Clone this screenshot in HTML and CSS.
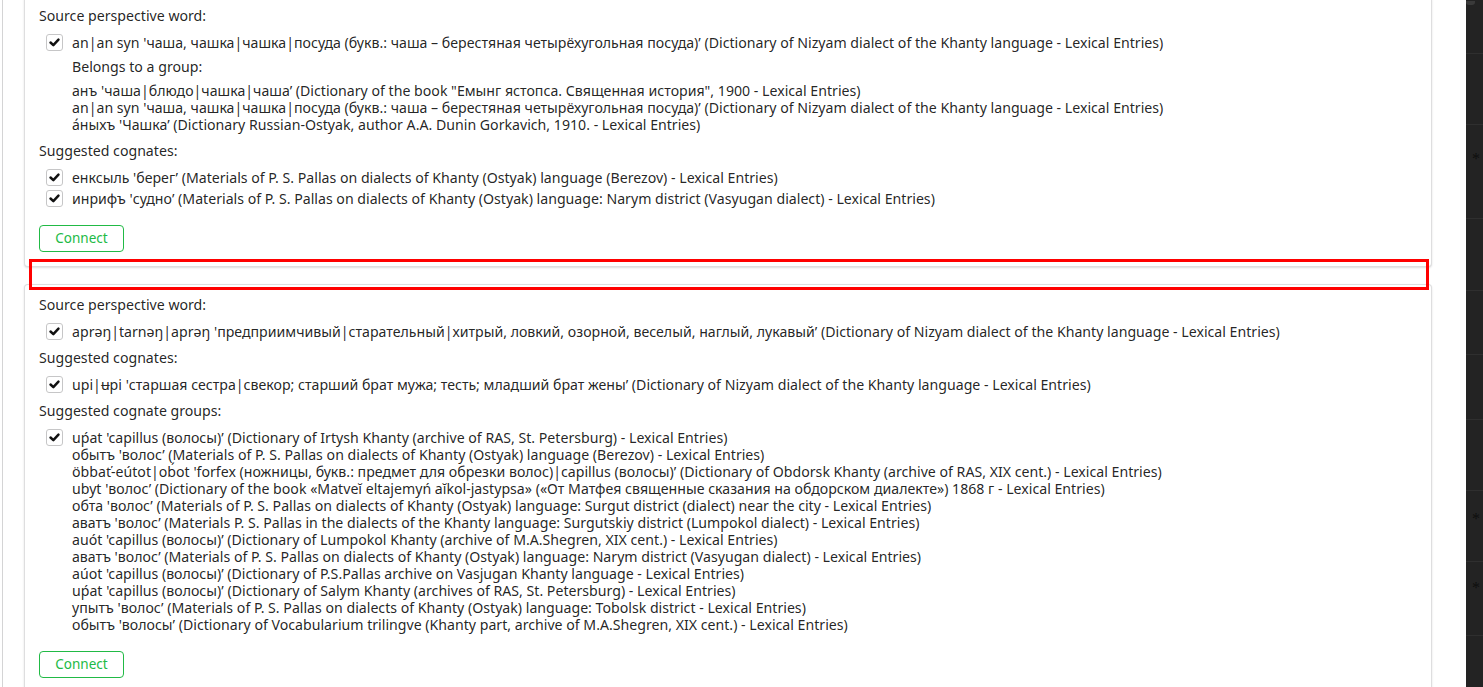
FILE: index.html
```html
<!DOCTYPE html>
<html lang="ru">
<head>
<meta charset="utf-8">
<title>Cognates</title>
<link rel="stylesheet" href="styles.css">
</head>
<body>
<div class="screen">
  <div class="modal">
    <div class="cards">
      <div class="card">
        <div class="label">Source perspective word:</div>
        <div class="item">
          <span class="cb"><svg viewBox="0 0 17 17"><polyline points="4,8.5 7.2,11.5 13,5.2"/></svg></span>
          <div class="text">an|an syn 'чаша, чашка|чашка|посуда (букв.: чаша – берестяная четырёхугольная посуда)’ (Dictionary of Nizyam dialect of the Khanty language - Lexical Entries)</div>
        </div>
        <div class="group">
          <div class="label group-label">Belongs to a group:</div>
          <div class="lines">
            <div>анъ 'чаша|блюдо|чашка|чаша’ (Dictionary of the book "Емынг ястопса. Священная история", 1900 - Lexical Entries)</div>
            <div>an|an syn 'чаша, чашка|чашка|посуда (букв.: чаша – берестяная четырёхугольная посуда)’ (Dictionary of Nizyam dialect of the Khanty language - Lexical Entries)</div>
            <div>а́ныхъ 'Чашка’ (Dictionary Russian-Ostyak, author A.A. Dunin Gorkavich, 1910. - Lexical Entries)</div>
          </div>
        </div>
        <div class="label section after-group">Suggested cognates:</div>
        <div class="item">
          <span class="cb"><svg viewBox="0 0 17 17"><polyline points="4,8.5 7.2,11.5 13,5.2"/></svg></span>
          <div class="text">енксыль 'берег’ (Materials of P. S. Pallas on dialects of Khanty (Ostyak) language (Berezov) - Lexical Entries)</div>
        </div>
        <div class="item tight">
          <span class="cb"><svg viewBox="0 0 17 17"><polyline points="4,8.5 7.2,11.5 13,5.2"/></svg></span>
          <div class="text">инрифъ 'судно’ (Materials of P. S. Pallas on dialects of Khanty (Ostyak) language: Narym district (Vasyugan dialect) - Lexical Entries)</div>
        </div>
        <button class="connect">Connect</button>
      </div>

      <div class="card">
        <div class="label">Source perspective word:</div>
        <div class="item">
          <span class="cb"><svg viewBox="0 0 17 17"><polyline points="4,8.5 7.2,11.5 13,5.2"/></svg></span>
          <div class="text">aprəŋ|tarnəŋ|aprəŋ 'предприимчивый|старательный|хитрый, ловкий, озорной, веселый, наглый, лукавый’ (Dictionary of Nizyam dialect of the Khanty language - Lexical Entries)</div>
        </div>
        <div class="label section">Suggested cognates:</div>
        <div class="item">
          <span class="cb"><svg viewBox="0 0 17 17"><polyline points="4,8.5 7.2,11.5 13,5.2"/></svg></span>
          <div class="text">upi|ʉpi 'старшая сестра|свекор; старший брат мужа; тесть; младший брат жены’ (Dictionary of Nizyam dialect of the Khanty language - Lexical Entries)</div>
        </div>
        <div class="label section">Suggested cognate groups:</div>
        <div class="item">
          <span class="cb"><svg viewBox="0 0 17 17"><polyline points="4,8.5 7.2,11.5 13,5.2"/></svg></span>
          <div class="text">
            <div>uṕat 'capillus (волосы)’ (Dictionary of Irtysh Khanty (archive of RAS, St. Petersburg) - Lexical Entries)</div>
            <div>обытъ 'волос’ (Materials of P. S. Pallas on dialects of Khanty (Ostyak) language (Berezov) - Lexical Entries)</div>
            <div>öbbať-eútot|ob́ot 'forfex (ножницы, букв.: предмет для обрезки волос)|capillus (волосы)’ (Dictionary of Obdorsk Khanty (archive of RAS, XIX cent.) - Lexical Entries)</div>
            <div>ubyt 'волос’ (Dictionary of the book «Matveĭ eltajemyń aĭkol-jastypsa» («От Матфея священные сказания на обдорском диалекте») 1868 г - Lexical Entries)</div>
            <div>обта 'волос’ (Materials of P. S. Pallas on dialects of Khanty (Ostyak) language: Surgut district (dialect) near the city - Lexical Entries)</div>
            <div>аватъ 'волос’ (Materials P. S. Pallas in the dialects of the Khanty language: Surgutskiy district (Lumpokol dialect) - Lexical Entries)</div>
            <div>auót 'capillus (волосы)’ (Dictionary of Lumpokol Khanty (archive of M.A.Shegren, XIX cent.) - Lexical Entries)</div>
            <div>аватъ 'волос’ (Materials of P. S. Pallas on dialects of Khanty (Ostyak) language: Narym district (Vasyugan dialect) - Lexical Entries)</div>
            <div>aúot 'capillus (волосы)’ (Dictionary of P.S.Pallas archive on Vasjugan Khanty language - Lexical Entries)</div>
            <div>uṕat 'capillus (волосы)’ (Dictionary of Salym Khanty (archives of RAS, St. Petersburg) - Lexical Entries)</div>
            <div>упытъ 'волос’ (Materials of P. S. Pallas on dialects of Khanty (Ostyak) language: Tobolsk district - Lexical Entries)</div>
            <div>обытъ 'волосы’ (Dictionary of Vocabularium trilingve (Khanty part, archive of M.A.Shegren, XIX cent.) - Lexical Entries)</div>
          </div>
        </div>
        <button class="connect">Connect</button>
      </div>
    </div>
    <div class="highlight"></div>
  </div>
  <div class="backdrop">
    <div class="cell c1"><span class="peek"></span></div>
    <div class="cell c2"></div>
    <div class="cell c3"><span class="star">*</span></div>
    <div class="cell c4"></div>
    <div class="cell c5"></div>
    <div class="cell c6"></div>
    <div class="cell c7"></div>
    <div class="cell c8"><span class="star">*</span></div>
    <div class="cell c9"><span class="star">*</span></div>
    <div class="cell c10"></div>
  </div>
</div>
</body>
</html>
```

FILE: styles.css
```css
* { box-sizing: border-box; }

html, body {
  margin: 0;
  padding: 0;
  background: #ffffff;
}

body {
  width: 1483px;
  height: 687px;
  overflow: hidden;
  font-family: "Noto Sans", "Open Sans", sans-serif;
  font-size: 14.15px;
  color: rgba(0, 0, 0, 0.87);
}

.screen {
  display: flex;
  height: 687px;
}

.modal {
  position: relative;
  flex: 1;
  margin-left: 2px;
  border-left: 1px solid #d4d4d5;
  padding: 0 34px 0 21px;
  overflow: hidden;
}

.cards {
  display: flex;
  flex-direction: column;
  gap: 17px;
  margin-top: -5px;
}

.card {
  background: #fff;
  border: 1px solid rgba(34, 36, 38, 0.15);
  border-radius: 4px;
  box-shadow: 0 1px 2px 0 rgba(34, 36, 38, 0.15);
  padding: 10px 14px 14px 14px;
}

.label {
  line-height: 19px;
  height: 19px;
  white-space: nowrap;
}

.label.section {
  margin-top: 6px;
}

.label.section.after-group {
  margin-top: 8px;
}

.item {
  display: flex;
  align-items: flex-start;
  margin-top: 7px;
  padding: 2px 0 2px 7px;
}

.item.tight {
  margin-top: 0;
}

.cb {
  flex: none;
  width: 17px;
  height: 17px;
  border: 1px solid #c6c6c7;
  border-radius: 3px;
  background: #fff;
  display: flex;
  align-items: center;
  justify-content: center;
}

.cb svg {
  width: 15px;
  height: 15px;
}

.cb polyline {
  fill: none;
  stroke: #111;
  stroke-width: 2.8;
  stroke-linecap: round;
  stroke-linejoin: round;
}

.text {
  margin-left: 9px;
  line-height: 17px;
  white-space: nowrap;
}

.group {
  padding-left: 33px;
}

.group-label {
  margin-top: 4px;
}

.lines {
  margin-top: 6px;
  line-height: 17px;
  white-space: nowrap;
}

.connect {
  display: block;
  margin-top: 16px;
  width: 85px;
  height: 27px;
  padding: 0;
  border: 1px solid #21ba45;
  border-radius: 4px;
  background: #fff;
  color: #21ba45;
  font-family: "Noto Sans", "Open Sans", sans-serif;
  font-size: 13.5px;
  line-height: 25px;
  text-align: center;
}

.highlight {
  position: absolute;
  left: 26px;
  top: 259px;
  width: 1400px;
  height: 31px;
  border: 3px solid #ff0000;
}

.backdrop {
  flex: none;
  width: 17px;
  background: #232323;
  display: flex;
  flex-direction: column;
  overflow: hidden;
  font-family: "Liberation Serif", serif;
}

.cell {
  flex: none;
  border-bottom: 1px solid #2f2f2f;
  position: relative;
}

.c1 { height: 54px; }
.c2 { height: 71px; }
.c3 { height: 94px; }
.c4 { height: 72px; }
.c5 { height: 64px; }
.c6 { height: 65px; }
.c7 { height: 71px; }
.c8 { height: 71px; }
.c9 { height: 74px; }
.c10 { height: 60px; border-bottom: none; }

.peek {
  display: block;
  width: 9px;
  height: 4px;
  margin-top: 1px;
  border-radius: 0 0 3px 3px;
  background: #3a3a3a;
}

.star {
  display: block;
  margin-top: 26px;
  padding-left: 6px;
  color: #0e0e0e;
  font-size: 16px;
  line-height: 16px;
}

.c8 .star { margin-top: 20px; }
.c9 .star { margin-top: 18px; }
```
